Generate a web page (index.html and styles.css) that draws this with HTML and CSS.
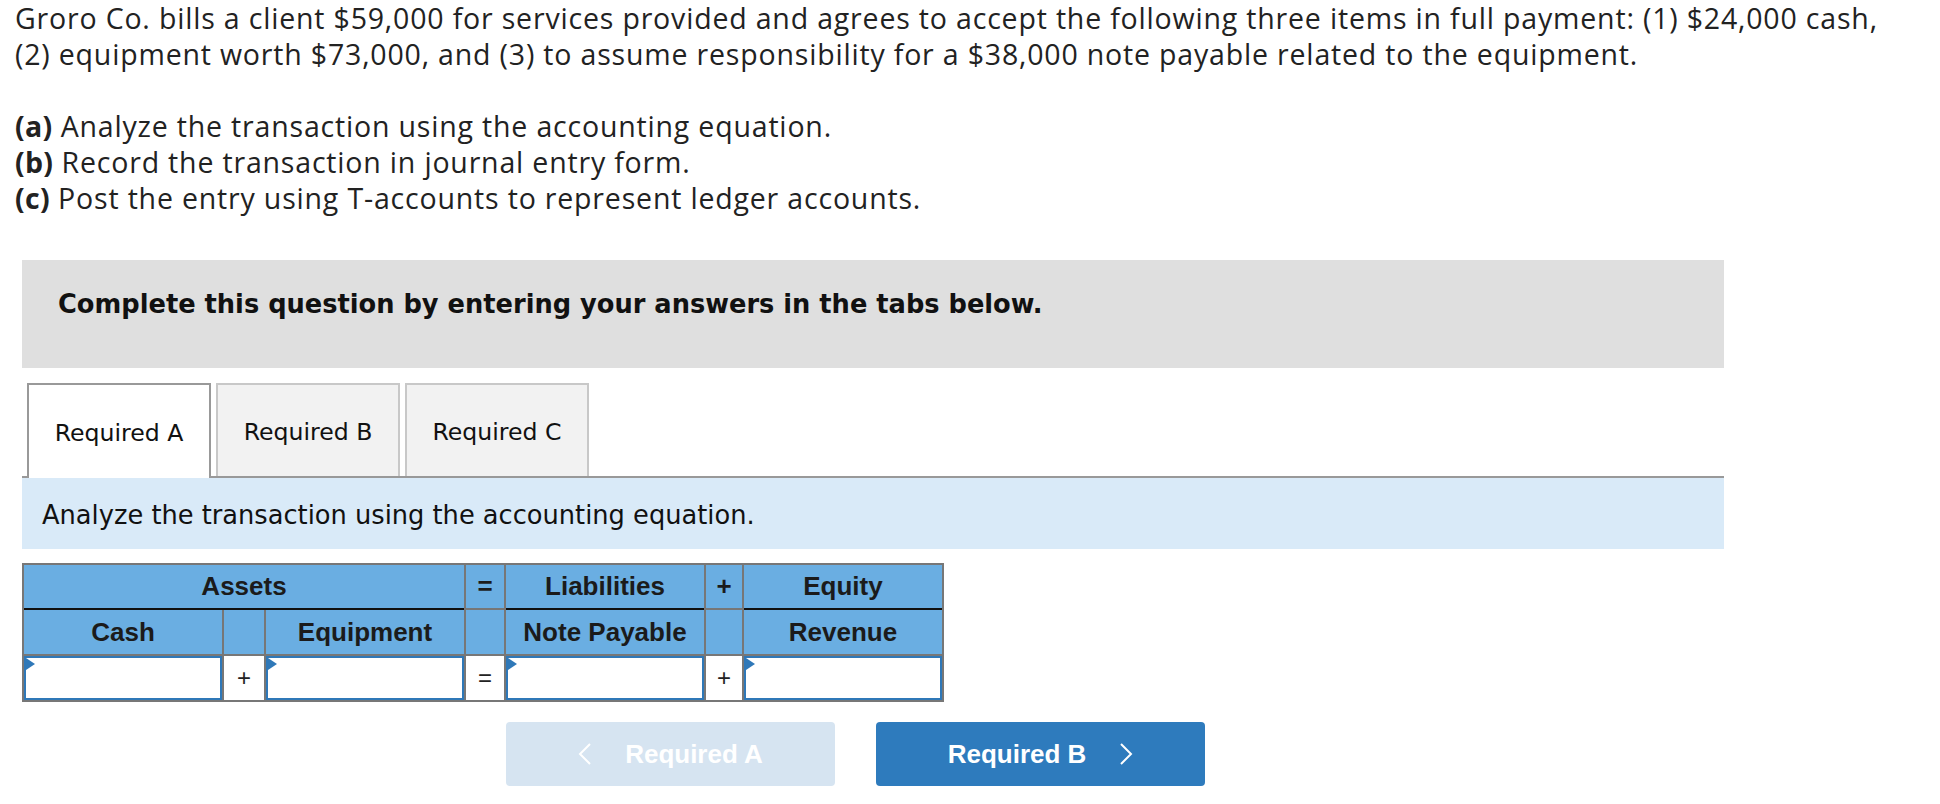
FILE: index.html
```html
<!DOCTYPE html>
<html lang="en">
<head>
<meta charset="utf-8">
<title>Groro Co. question</title>
<link rel="stylesheet" href="styles.css">
</head>
<body>
<div class="page">
  <div class="question">
    <p class="intro">Groro Co. bills a client $59,000 for services provided and agrees to accept the following three items in full payment: (1) $24,000 cash, (2) equipment worth $73,000, and (3) to assume responsibility for a $38,000 note payable related to the equipment.</p>
    <p class="parts"><b>(a)</b> Analyze the transaction using the accounting equation.<br><b>(b)</b> Record the transaction in journal entry form.<br><b>(c)</b> Post the entry using T-accounts to represent ledger accounts.</p>
  </div>

  <div class="work">
    <div class="instructions">Complete this question by entering your answers in the tabs below.</div>

    <div class="tabs">
      <div class="tab active">Required A</div>
      <div class="tab">Required B</div>
      <div class="tab">Required C</div>
    </div>

    <div class="prompt">Analyze the transaction using the accounting equation.</div>

    <div class="eq">
      <div class="hd span3 bar">Assets</div>
      <div class="hd">=</div>
      <div class="hd bar">Liabilities</div>
      <div class="hd">+</div>
      <div class="hd bar">Equity</div>

      <div class="hd">Cash</div>
      <div class="hd"></div>
      <div class="hd">Equipment</div>
      <div class="hd"></div>
      <div class="hd">Note Payable</div>
      <div class="hd"></div>
      <div class="hd">Revenue</div>

      <div class="inp"></div>
      <div class="op">+</div>
      <div class="inp"></div>
      <div class="op">=</div>
      <div class="inp"></div>
      <div class="op">+</div>
      <div class="inp"></div>
    </div>

    <div class="nav">
      <div class="btn prev">
        <svg class="chev" width="14" height="22" viewBox="0 0 14 22"><polyline points="12,1 2,11 12,21" fill="none" stroke="#fff" stroke-width="2"/></svg>
        <span>Required A</span>
      </div>
      <div class="btn next">
        <span>Required B</span>
        <svg class="chev" width="14" height="22" viewBox="0 0 14 22"><polyline points="2,1 12,11 2,21" fill="none" stroke="#fff" stroke-width="2"/></svg>
      </div>
    </div>
  </div>
</div>
</body>
</html>
```

FILE: styles.css
```css
html, body {
  margin: 0;
  padding: 0;
  background: #fff;
}

.question {
  padding-left: 15px;
  width: 1895px;
  font-family: "Open Sans", "Liberation Sans", sans-serif;
  font-size: 28.5px;
  letter-spacing: 0.82px;
  line-height: 36px;
  color: #222;
}

.question p {
  margin: 0;
}

.question .intro {
  margin-bottom: 36px;
}

.question b {
  font-weight: 700;
  letter-spacing: 0.3px;
}

.work {
  margin: 44px 0 0 22px;
  width: 1702px;
}

.instructions {
  box-sizing: border-box;
  height: 108px;
  padding: 29px 36px 0;
  background: #dfdfdf;
  font-family: "DejaVu Sans", Verdana, sans-serif;
  font-weight: bold;
  font-size: 25.7px;
  line-height: 30px;
  color: #111;
}

.tabs {
  display: flex;
  gap: 5px;
  padding-left: 5px;
  margin-top: 15px;
  border-bottom: 2px solid #999;
}

.tab {
  box-sizing: border-box;
  width: 184px;
  height: 93px;
  padding-top: 3px;
  border: 2px solid #c8c8c8;
  border-bottom: none;
  background: #f2f2f2;
  display: flex;
  align-items: center;
  justify-content: center;
  font-family: "DejaVu Sans", Verdana, sans-serif;
  font-size: 23.6px;
  color: #111;
}

.tab.active {
  position: relative;
  height: 95px;
  margin-bottom: -2px;
  background: #fff;
  border-color: #999;
}

.prompt {
  box-sizing: border-box;
  height: 71px;
  padding: 3px 0 0 20px;
  background: #d9eaf8;
  display: flex;
  align-items: center;
  font-family: "DejaVu Sans", Verdana, sans-serif;
  font-size: 25.7px;
  color: #111;
}

.eq {
  margin-top: 14px;
  width: fit-content;
  display: grid;
  grid-template-columns: 198px 40px 198px 38px 198px 36px 198px;
  grid-template-rows: 43px 44px 44px;
  gap: 2px;
  padding: 2px;
  background: #777;
}

.hd {
  background: #6aaee2;
  display: flex;
  align-items: center;
  justify-content: center;
  font-family: "Liberation Sans", Arial, sans-serif;
  font-weight: bold;
  font-size: 26px;
  color: #1b1b1b;
}

.span3 {
  grid-column: span 3;
}

.bar {
  box-shadow: 0 2px 0 #111;
}

.inp {
  position: relative;
  background: #fff;
  border: 2px solid #2f78b8;
}

.inp::before {
  content: "";
  position: absolute;
  top: 0;
  left: 0;
  width: 0;
  height: 0;
  border-left: 9px solid #2f78b8;
  border-top: 6px solid transparent;
  border-bottom: 6px solid transparent;
}

.op {
  background: #fff;
  display: flex;
  align-items: center;
  justify-content: center;
  font-family: "Liberation Sans", Arial, sans-serif;
  font-size: 24px;
  color: #222;
}

.nav {
  display: flex;
  gap: 41px;
  margin-top: 20px;
  padding-left: 484px;
}

.btn {
  width: 329px;
  height: 64px;
  border-radius: 4px;
  display: flex;
  align-items: center;
  justify-content: center;
  gap: 33px;
  font-family: "Liberation Sans", Arial, sans-serif;
  font-weight: bold;
  font-size: 26px;
  color: #fff;
}

.btn.prev {
  background: #d6e4f1;
}

.btn.next {
  background: #2e7bbd;
}

.chev {
  display: block;
}
```
